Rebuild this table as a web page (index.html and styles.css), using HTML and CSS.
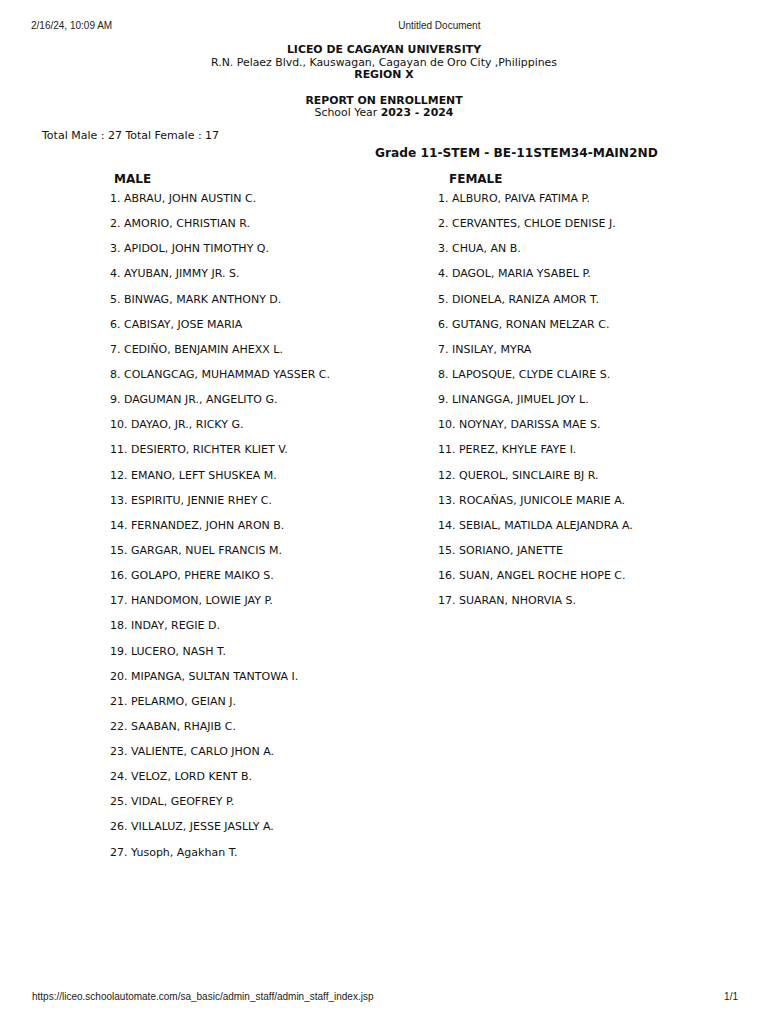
FILE: index.html
```html
<!DOCTYPE html>
<html>
<head>
<meta charset="utf-8">
<title>Untitled Document</title>
<link rel="stylesheet" href="styles.css">
</head>
<body>
<div class="page">
  <header class="print-header">
    <span class="date">2/16/24, 10:09 AM</span>
    <span class="doc-title">Untitled Document</span>
  </header>

  <main class="report">
    <div class="school">
      <div class="bold">LICEO DE CAGAYAN UNIVERSITY</div>
      <div>R.N. Pelaez Blvd., Kauswagan, Cagayan de Oro City ,Philippines</div>
      <div class="bold">REGION X</div>
      <div class="spacer"></div>
      <div class="bold">REPORT ON ENROLLMENT</div>
      <div>School Year <b>2023 - 2024</b></div>
    </div>

    <div class="totals">Total Male : 27 Total Female : 17</div>

    <div class="section-title">Grade 11-STEM - BE-11STEM34-MAIN2ND</div>

    <div class="lists">
      <div class="col">
        <div class="col-head male">MALE</div>
        <ul class="names">
          <li>1. ABRAU, JOHN AUSTIN C.</li>
          <li>2. AMORIO, CHRISTIAN R.</li>
          <li>3. APIDOL, JOHN TIMOTHY Q.</li>
          <li>4. AYUBAN, JIMMY JR. S.</li>
          <li>5. BINWAG, MARK ANTHONY D.</li>
          <li>6. CABISAY, JOSE MARIA</li>
          <li>7. CEDIÑO, BENJAMIN AHEXX L.</li>
          <li>8. COLANGCAG, MUHAMMAD YASSER C.</li>
          <li>9. DAGUMAN JR., ANGELITO G.</li>
          <li>10. DAYAO, JR., RICKY G.</li>
          <li>11. DESIERTO, RICHTER KLIET V.</li>
          <li>12. EMANO, LEFT SHUSKEA M.</li>
          <li>13. ESPIRITU, JENNIE RHEY C.</li>
          <li>14. FERNANDEZ, JOHN ARON B.</li>
          <li>15. GARGAR, NUEL FRANCIS M.</li>
          <li>16. GOLAPO, PHERE MAIKO S.</li>
          <li>17. HANDOMON, LOWIE JAY P.</li>
          <li>18. INDAY, REGIE D.</li>
          <li>19. LUCERO, NASH T.</li>
          <li>20. MIPANGA, SULTAN TANTOWA I.</li>
          <li>21. PELARMO, GEIAN J.</li>
          <li>22. SAABAN, RHAJIB C.</li>
          <li>23. VALIENTE, CARLO JHON A.</li>
          <li>24. VELOZ, LORD KENT B.</li>
          <li>25. VIDAL, GEOFREY P.</li>
          <li>26. VILLALUZ, JESSE JASLLY A.</li>
          <li>27. Yusoph, Agakhan T.</li>
        </ul>
      </div>
      <div class="col">
        <div class="col-head female">FEMALE</div>
        <ul class="names">
          <li>1. ALBURO, PAIVA FATIMA P.</li>
          <li>2. CERVANTES, CHLOE DENISE J.</li>
          <li>3. CHUA, AN B.</li>
          <li>4. DAGOL, MARIA YSABEL P.</li>
          <li>5. DIONELA, RANIZA AMOR T.</li>
          <li>6. GUTANG, RONAN MELZAR C.</li>
          <li>7. INSILAY, MYRA</li>
          <li>8. LAPOSQUE, CLYDE CLAIRE S.</li>
          <li>9. LINANGGA, JIMUEL JOY L.</li>
          <li>10. NOYNAY, DARISSA MAE S.</li>
          <li>11. PEREZ, KHYLE FAYE I.</li>
          <li>12. QUEROL, SINCLAIRE BJ R.</li>
          <li>13. ROCAÑAS, JUNICOLE MARIE A.</li>
          <li>14. SEBIAL, MATILDA ALEJANDRA A.</li>
          <li>15. SORIANO, JANETTE</li>
          <li>16. SUAN, ANGEL ROCHE HOPE C.</li>
          <li>17. SUARAN, NHORVIA S.</li>
        </ul>
      </div>
    </div>
  </main>

  <footer class="print-footer">
    <span>https://liceo.schoolautomate.com/sa_basic/admin_staff/admin_staff_index.jsp</span>
    <span>1/1</span>
  </footer>
</div>
</body>
</html>
```

FILE: styles.css
```css
html, body {
  margin: 0;
  padding: 0;
  background: #fff;
}

.page {
  width: 768px;
  height: 1024px;
  display: flex;
  flex-direction: column;
  color: #111;
  font-family: "DejaVu Sans", Verdana, sans-serif;
}

.print-header,
.print-footer {
  font-family: "Liberation Sans", Arial, sans-serif;
  font-size: 10px;
  color: #222;
  display: flex;
}

.print-header {
  padding: 20px 30px 0 31px;
  height: 12px;
}

.print-header .doc-title {
  margin-left: 286px;
}

.report {
  flex: 1;
  padding-top: 12px;
}

.school {
  text-align: center;
  font-size: 10.9px;
  line-height: 12.6px;
}

.bold {
  font-weight: bold;
}

.spacer {
  height: 13px;
}

.totals {
  font-size: 11px;
  padding: 9px 0 0 42px;
  line-height: 13px;
}

.section-title {
  font-size: 12.2px;
  font-weight: bold;
  padding: 2px 0 0 375px;
  line-height: 18px;
}

.lists {
  display: grid;
  grid-template-columns: 328px 1fr;
  padding-left: 110px;
  padding-top: 9px;
}

.col-head {
  font-size: 12px;
  font-weight: bold;
  line-height: 17px;
  margin-bottom: 3px;
}

.col-head.male {
  padding-left: 4px;
}

.col-head.female {
  padding-left: 11px;
}

.names {
  list-style: none;
  margin: 0;
  padding: 0;
  font-size: 11px;
}

.names li {
  height: 25.15px;
  line-height: 16px;
}

.print-footer {
  justify-content: space-between;
  padding: 0 30px 22px 32px;
}
```
